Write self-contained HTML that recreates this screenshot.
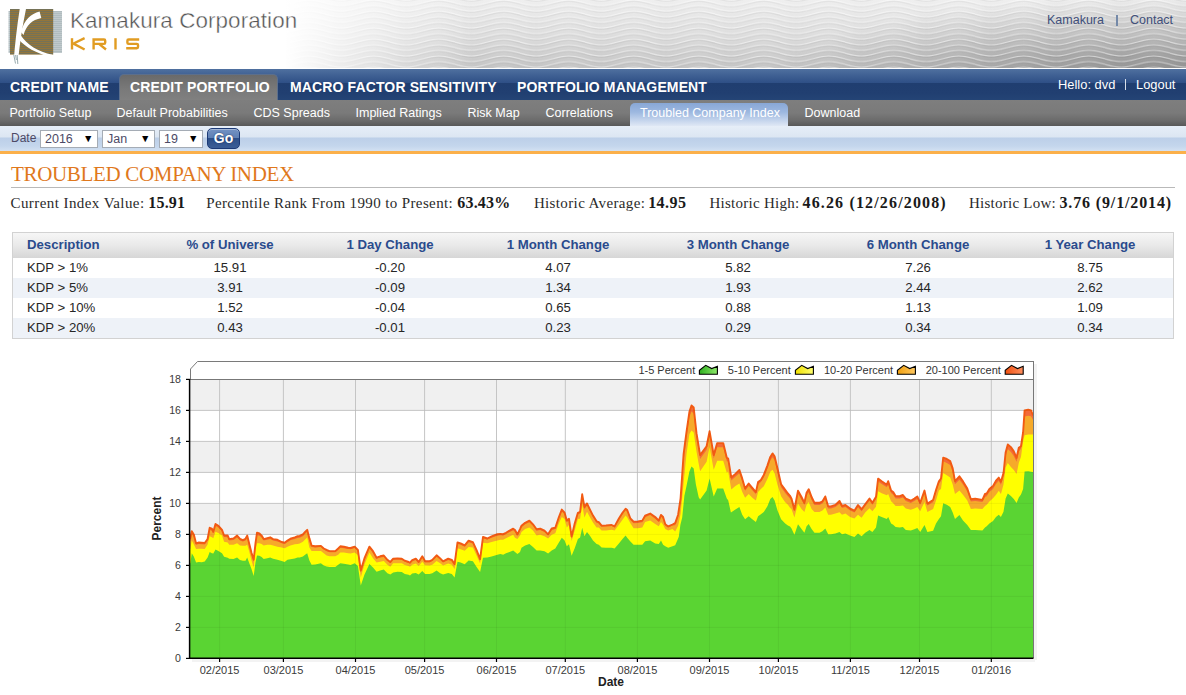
<!DOCTYPE html>
<html><head><meta charset="utf-8">
<style>
*{margin:0;padding:0;box-sizing:border-box}
html,body{width:1186px;height:695px;overflow:hidden;background:#fff;font-family:"Liberation Sans",sans-serif;position:relative}
.abs{position:absolute;white-space:nowrap}
#hdr{position:absolute;left:0;top:0;width:1186px;height:69px}
#nav{position:absolute;left:0;top:69px;width:1186px;height:31px;background:linear-gradient(#4f709f 0px,#3e5f92 7px,#2e4f86 14px,#203e70 14px,#213f71 24px,#244475 31px)}
#nav .it{position:absolute;white-space:nowrap;top:0;height:31px;font-weight:bold;font-size:14px;color:#fff;line-height:36px;padding:0 10px;letter-spacing:0.13px}
#nav .act{top:5px;height:26px;line-height:25px;border-radius:5px 5px 0 0;background:linear-gradient(#6a6a6a,#7a7a7a 60%,#808080);border:1px solid #5c6f8c;border-bottom:none}
#sub{position:absolute;left:0;top:100px;width:1186px;height:26px;background:linear-gradient(#7e7e7e 0,#7a7a7a 50%,#6a6a6a 80%,#585858 100%)}
#sub .it{position:absolute;white-space:nowrap;top:0;height:26px;font-size:12.5px;color:#fff;line-height:26px}
#sub .act{top:3px;height:23px;line-height:21px;padding:0 10px;border-radius:5px 5px 0 0;background:linear-gradient(#88a7d6,#9db8e0 40%,#dfe8f5 100%)}
#datebar{position:absolute;left:0;top:126px;width:1186px;height:25px;background:linear-gradient(#e6eef8 0,#dce6f2 11px,#bccfe8 12px,#c4d6ec 20px,#d3e1f2 25px)}
#oline{position:absolute;left:0;top:151px;width:1186px;height:3px;background:#fbb04a}
.sel{position:absolute;top:130px;height:18px;background:#fff;border:1px solid #a5acb5;font-size:12.5px;color:#4d4a66;line-height:17px;padding-left:4px}
.sel b{position:absolute;right:3.5px;top:0px;font-size:10.5px;color:#000;font-weight:normal;line-height:15px}
#go{position:absolute;left:207px;top:128px;width:33px;height:21px;border-radius:5px;background:linear-gradient(#7392c4 0,#5f80b4 48%,#2c4f89 50%,#3b5e96 100%);border:1px solid #1c3a76;box-shadow:inset 0 1px 0 rgba(255,255,255,0.35);color:#fff;font-weight:bold;font-size:14px;text-align:center;line-height:19px;text-shadow:0 0 1.5px #0b2150}
#title{position:absolute;left:11px;top:162px;font-family:"Liberation Serif",serif;font-size:21px;letter-spacing:-0.33px;color:#e0781c;line-height:25px}
#hr{position:absolute;left:11px;top:187px;width:1164px;height:1px;background:#b9b9b9}
.st{position:absolute;top:192px;font-family:"Liberation Serif",serif;font-size:15px;color:#2a2a2a;line-height:22px;white-space:nowrap}
.sv{font-weight:bold;font-size:16px;color:#1a1a1a;top:191.5px}
#tbl{position:absolute;left:12px;top:232px;width:1162px;height:107px;border:1px solid #d2d2d2;font-size:13.2px}
#tbl .hd{position:absolute;left:0;top:0;width:1160px;height:25px;background:linear-gradient(#f6f6f6,#e9e9e9 50%,#d6d6d6)}
#tbl .r{position:absolute;left:0;width:1160px;height:20px}
.c{position:absolute;top:0;text-align:center;white-space:nowrap}
.hd .c{color:#2a4b8d;font-weight:bold;line-height:23px}
.r .c{color:#262626;line-height:19px}
</style></head><body>
<div id="hdr">
<svg width="1186" height="69" style="position:absolute;left:0;top:0">
<defs>
<linearGradient id="hg" x1="0" y1="0" x2="0" y2="1"><stop offset="0" stop-color="#efefef"/><stop offset="0.5" stop-color="#dedede"/><stop offset="1" stop-color="#c4c4c4"/></linearGradient>
<radialGradient id="hdk" cx="0" cy="0" r="1" gradientUnits="userSpaceOnUse" gradientTransform="translate(1186,80) scale(420,85)"><stop offset="0" stop-color="#000" stop-opacity="0.30"/><stop offset="1" stop-color="#000" stop-opacity="0"/></radialGradient>
<linearGradient id="fade" x1="0" y1="0" x2="1186" y2="0" gradientUnits="userSpaceOnUse"><stop offset="0" stop-color="#fff" stop-opacity="1"/><stop offset="0.24" stop-color="#fff" stop-opacity="1"/><stop offset="0.30" stop-color="#fff" stop-opacity="0.6"/><stop offset="0.40" stop-color="#fff" stop-opacity="0.0"/></linearGradient>
<pattern id="wv" x="0" y="0" width="65" height="5.6" patternUnits="userSpaceOnUse">
<path d="M0 -2.80 C5.30 -1.36 10.37 0.00 16.25 0.00 C22.13 0.00 27.20 -1.36 32.50 -2.80 C37.80 -4.23 42.87 -5.60 48.75 -5.60 C54.63 -5.60 59.70 -4.23 65.00 -2.80 M0 2.80 C5.30 4.23 10.37 5.60 16.25 5.60 C22.13 5.60 27.20 4.23 32.50 2.80 C37.80 1.36 42.87 0.00 48.75 0.00 C54.63 0.00 59.70 1.36 65.00 2.80 M0 8.40 C5.30 9.83 10.37 11.20 16.25 11.20 C22.13 11.20 27.20 9.83 32.50 8.40 C37.80 6.96 42.87 5.60 48.75 5.60 C54.63 5.60 59.70 6.96 65.00 8.40" fill="none" stroke="#000" stroke-opacity="0.05" stroke-width="1.2" transform="translate(0,1.2)"/>
<path d="M0 -2.80 C5.30 -1.36 10.37 0.00 16.25 0.00 C22.13 0.00 27.20 -1.36 32.50 -2.80 C37.80 -4.23 42.87 -5.60 48.75 -5.60 C54.63 -5.60 59.70 -4.23 65.00 -2.80 M0 2.80 C5.30 4.23 10.37 5.60 16.25 5.60 C22.13 5.60 27.20 4.23 32.50 2.80 C37.80 1.36 42.87 0.00 48.75 0.00 C54.63 0.00 59.70 1.36 65.00 2.80 M0 8.40 C5.30 9.83 10.37 11.20 16.25 11.20 C22.13 11.20 27.20 9.83 32.50 8.40 C37.80 6.96 42.87 5.60 48.75 5.60 C54.63 5.60 59.70 6.96 65.00 8.40" fill="none" stroke="#fff" stroke-opacity="0.5" stroke-width="1.15"/>
</pattern>
</defs>
<rect width="1186" height="69" fill="url(#hg)"/>
<rect width="1186" height="69" fill="url(#hdk)"/>
<rect width="1186" height="69" fill="url(#wv)"/>
<rect width="1186" height="69" fill="url(#fade)"/>
<rect y="68" width="1186" height="1" fill="#fff"/>
</svg>
<svg width="70" height="69" style="position:absolute;left:0;top:0" viewBox="0 0 70 69">
<defs><pattern id="ht" width="2" height="2" patternUnits="userSpaceOnUse"><rect width="2" height="2" fill="#8c6f36"/><rect y="1.3" width="2" height="0.7" fill="#5e7478" opacity="0.7"/><circle cx="1" cy="0.6" r="0.45" fill="#b09050"/></pattern>
<pattern id="st" width="3" height="2" patternUnits="userSpaceOnUse"><rect y="0.6" width="3" height="0.9" fill="#4f6a70" opacity="0.9"/></pattern></defs>
<rect x="8.5" y="11" width="53.5" height="42" fill="url(#st)"/>
<rect x="10" y="9" width="43.2" height="45.6" fill="url(#ht)"/>
<path d="M19.7 9 L26 9 C 23 24, 20 40, 17.8 64 L 13.6 62 C 15 44, 17 26, 19.7 9 Z" fill="#fff"/>
<path d="M21 32 C 24 20, 31 14, 39.6 11.6 L 41.3 18 C 32 20, 26.5 25, 23.5 35 Z" fill="#fff"/>
<path d="M20.5 35 C 27 45, 38 51.5, 52.5 54.8 L 48 56.2 C 36 53, 26 47.5, 18.8 39.5 Z" fill="#fff"/>
<path d="M13.8 55 L 15.5 63.5 M 17.2 55 L 17.8 64 M 15.6 55 L 16.4 60" stroke="#6d868b" stroke-width="0.7" fill="none"/>
</svg>
<div class="abs" style="left:70px;top:6px;font-size:22.4px;color:#555;line-height:30px;letter-spacing:0.1px;-webkit-text-stroke:0.4px #fff">Kamakura Corporation</div>
<svg width="80" height="20" style="position:absolute;left:65px;top:33px" viewBox="65 33 80 20">
<g fill="none" stroke="#e19c22" stroke-width="2.4" stroke-linejoin="miter">
<path d="M72 38.2 L72 49.5"/>
<path d="M72.5 44 L84.6 38.2 M73.5 43.6 L84.6 49.5"/>
<path d="M93.6 49.5 L93.6 39.5 L104 39.5 Q105.2 39.5 105.2 40.7 L105.2 42.7 Q105.2 43.9 104 43.9 L93.6 43.9 M99 43.9 L106 49.5"/>
<path d="M115.5 38.2 L115.5 49.5"/>
<path d="M139.2 39.5 L128.6 39.5 Q127.4 39.5 127.4 40.7 L127.4 42.7 Q127.4 43.9 128.6 43.9 L136.8 43.9 Q138 43.9 138 45.1 L138 47 Q138 48.2 136.8 48.2 L126.2 48.2"/>
</g>
</svg>
<div class="abs" style="left:1047px;top:12px;font-size:12.5px;color:#3f4f7a;line-height:16px">Kamakura</div>
<div class="abs" style="left:1116px;top:15px;width:2px;height:11px;background:#7489a8"></div>
<div class="abs" style="left:1130px;top:12px;font-size:12.5px;color:#3f4f7a;line-height:16px">Contact</div>
</div>

<div id="nav">
<div class="it" style="left:0">CREDIT NAME</div>
<div class="it act" style="left:119px;width:159px">CREDIT PORTFOLIO</div>
<div class="it" style="left:280px">MACRO FACTOR SENSITIVITY</div>
<div class="it" style="left:507px">PORTFOLIO MANAGEMENT</div>
<div class="abs" style="left:1058px;top:8px;font-size:12.9px;color:#fff;line-height:16px">Hello: dvd</div>
<div class="abs" style="left:1125px;top:10px;width:1px;height:11px;background:#d8dfea"></div>
<div class="abs" style="left:1136px;top:8px;font-size:12.9px;color:#fff;line-height:16px">Logout</div>
</div>

<div id="sub">
<div class="it" style="left:9.5px">Portfolio Setup</div>
<div class="it" style="left:116.5px">Default Probabilities</div>
<div class="it" style="left:253.5px">CDS Spreads</div>
<div class="it" style="left:355.5px">Implied Ratings</div>
<div class="it" style="left:467.5px">Risk Map</div>
<div class="it" style="left:545.5px">Correlations</div>
<div class="it act" style="left:630px;width:158px">Troubled Company Index</div>
<div class="it" style="left:804.5px">Download</div>
</div>

<div id="datebar"></div>
<div class="abs" style="left:11px;top:130px;font-size:12px;color:#4d4a66;line-height:16px">Date</div>
<div class="sel" style="left:40px;width:58px">2016<b>&#9660;</b></div>
<div class="sel" style="left:102px;width:53px">Jan<b>&#9660;</b></div>
<div class="sel" style="left:159px;width:44px">19<b>&#9660;</b></div>
<div id="go">Go</div>
<div id="oline"></div>

<div id="title">TROUBLED COMPANY INDEX</div>
<div id="hr"></div>
<div class="st" style="left:10.5px;letter-spacing:0.424px">Current Index Value:</div>
<div class="st" style="left:206.2px;letter-spacing:0.380px">Percentile Rank From 1990 to Present:</div>
<div class="st" style="left:533.9px;letter-spacing:0.367px">Historic Average:</div>
<div class="st" style="left:709.4px;letter-spacing:0.272px">Historic High:</div>
<div class="st" style="left:969.0px;letter-spacing:0.254px">Historic Low:</div>
<div class="st sv" style="left:148.2px;letter-spacing:0.225px">15.91</div>
<div class="st sv" style="left:457.2px;letter-spacing:0.220px">63.43%</div>
<div class="st sv" style="left:648.2px;letter-spacing:0.425px">14.95</div>
<div class="st sv" style="left:802.5px;letter-spacing:1.155px">46.26 (12/26/2008)</div>
<div class="st sv" style="left:1059.5px;letter-spacing:0.860px">3.76 (9/1/2014)</div>

<div id="tbl">
<div class="hd">
<div class="c" style="left:14px;text-align:left">Description</div>
<div class="c" style="left:136px;width:162px">% of Universe</div>
<div class="c" style="left:298px;width:158px">1 Day Change</div>
<div class="c" style="left:456px;width:178px">1 Month Change</div>
<div class="c" style="left:634px;width:182px">3 Month Change</div>
<div class="c" style="left:816px;width:178px">6 Month Change</div>
<div class="c" style="left:994px;width:166px">1 Year Change</div>
</div>
<div class="r" style="top:25px;background:#fff">
<div class="c" style="left:14px;text-align:left">KDP &gt; 1%</div>
<div class="c" style="left:136px;width:162px">15.91</div><div class="c" style="left:298px;width:158px">-0.20</div><div class="c" style="left:456px;width:178px">4.07</div><div class="c" style="left:634px;width:182px">5.82</div><div class="c" style="left:816px;width:178px">7.26</div><div class="c" style="left:994px;width:166px">8.75</div>
</div>
<div class="r" style="top:45px;background:#eef2f8">
<div class="c" style="left:14px;text-align:left">KDP &gt; 5%</div>
<div class="c" style="left:136px;width:162px">3.91</div><div class="c" style="left:298px;width:158px">-0.09</div><div class="c" style="left:456px;width:178px">1.34</div><div class="c" style="left:634px;width:182px">1.93</div><div class="c" style="left:816px;width:178px">2.44</div><div class="c" style="left:994px;width:166px">2.62</div>
</div>
<div class="r" style="top:65px;background:#fff">
<div class="c" style="left:14px;text-align:left">KDP &gt; 10%</div>
<div class="c" style="left:136px;width:162px">1.52</div><div class="c" style="left:298px;width:158px">-0.04</div><div class="c" style="left:456px;width:178px">0.65</div><div class="c" style="left:634px;width:182px">0.88</div><div class="c" style="left:816px;width:178px">1.13</div><div class="c" style="left:994px;width:166px">1.09</div>
</div>
<div class="r" style="top:85px;background:#eef2f8">
<div class="c" style="left:14px;text-align:left">KDP &gt; 20%</div>
<div class="c" style="left:136px;width:162px">0.43</div><div class="c" style="left:298px;width:158px">-0.01</div><div class="c" style="left:456px;width:178px">0.23</div><div class="c" style="left:634px;width:182px">0.29</div><div class="c" style="left:816px;width:178px">0.34</div><div class="c" style="left:994px;width:166px">0.34</div>
</div>
</div>

<svg width="1186" height="695" style="position:absolute;left:0;top:0">
<defs><clipPath id="pc"><rect x="190" y="379.4" width="843.4" height="279"/></clipPath><linearGradient id="lgG" x1="0" y1="0" x2="1" y2="0"><stop offset="0" stop-color="#2fb020"/><stop offset="1" stop-color="#8ee86a"/></linearGradient><linearGradient id="lgY" x1="0" y1="0" x2="1" y2="0"><stop offset="0" stop-color="#f0e000"/><stop offset="1" stop-color="#ffff70"/></linearGradient><linearGradient id="lgO" x1="0" y1="0" x2="1" y2="0"><stop offset="0" stop-color="#f0a010"/><stop offset="1" stop-color="#ffc860"/></linearGradient><linearGradient id="lgR" x1="0" y1="0" x2="1" y2="0"><stop offset="0" stop-color="#f05010"/><stop offset="1" stop-color="#ff9060"/></linearGradient></defs>
<path d="M190.5 379 L190.5 369 L197.5 361.5 L1033.5 361.5 L1033.5 658" fill="#fff" stroke="#7a7a7a" stroke-width="1"/>
<rect x="1034" y="364" width="3" height="296" fill="#f3f3f3"/>
<rect x="192" y="659" width="843" height="3" fill="#f3f3f3"/>
<rect x="190" y="627.4" width="843.4" height="31.0" fill="#f0f0f0"/>
<rect x="190" y="596.4" width="843.4" height="31.0" fill="#ffffff"/>
<rect x="190" y="565.4" width="843.4" height="31.0" fill="#f0f0f0"/>
<rect x="190" y="534.4" width="843.4" height="31.0" fill="#ffffff"/>
<rect x="190" y="503.4" width="843.4" height="31.0" fill="#f0f0f0"/>
<rect x="190" y="472.4" width="843.4" height="31.0" fill="#ffffff"/>
<rect x="190" y="441.4" width="843.4" height="31.0" fill="#f0f0f0"/>
<rect x="190" y="410.4" width="843.4" height="31.0" fill="#ffffff"/>
<rect x="190" y="379.4" width="843.4" height="31.0" fill="#f0f0f0"/>
<line x1="190" x2="1033.4" y1="627.4" y2="627.4" stroke="#d0d0d0" stroke-width="1"/>
<line x1="190" x2="1033.4" y1="596.4" y2="596.4" stroke="#d0d0d0" stroke-width="1"/>
<line x1="190" x2="1033.4" y1="565.4" y2="565.4" stroke="#d0d0d0" stroke-width="1"/>
<line x1="190" x2="1033.4" y1="534.4" y2="534.4" stroke="#d0d0d0" stroke-width="1"/>
<line x1="190" x2="1033.4" y1="503.4" y2="503.4" stroke="#d0d0d0" stroke-width="1"/>
<line x1="190" x2="1033.4" y1="472.4" y2="472.4" stroke="#d0d0d0" stroke-width="1"/>
<line x1="190" x2="1033.4" y1="441.4" y2="441.4" stroke="#d0d0d0" stroke-width="1"/>
<line x1="190" x2="1033.4" y1="410.4" y2="410.4" stroke="#d0d0d0" stroke-width="1"/>
<line x1="219.6" x2="219.6" y1="379.4" y2="658" stroke="#d0d0d0" stroke-width="1"/>
<line x1="283.4" x2="283.4" y1="379.4" y2="658" stroke="#d0d0d0" stroke-width="1"/>
<line x1="355.5" x2="355.5" y1="379.4" y2="658" stroke="#d0d0d0" stroke-width="1"/>
<line x1="424.6" x2="424.6" y1="379.4" y2="658" stroke="#d0d0d0" stroke-width="1"/>
<line x1="496.5" x2="496.5" y1="379.4" y2="658" stroke="#d0d0d0" stroke-width="1"/>
<line x1="565.3" x2="565.3" y1="379.4" y2="658" stroke="#d0d0d0" stroke-width="1"/>
<line x1="637.4" x2="637.4" y1="379.4" y2="658" stroke="#d0d0d0" stroke-width="1"/>
<line x1="709.5" x2="709.5" y1="379.4" y2="658" stroke="#d0d0d0" stroke-width="1"/>
<line x1="778.4" x2="778.4" y1="379.4" y2="658" stroke="#d0d0d0" stroke-width="1"/>
<line x1="850.4" x2="850.4" y1="379.4" y2="658" stroke="#d0d0d0" stroke-width="1"/>
<line x1="919.5" x2="919.5" y1="379.4" y2="658" stroke="#d0d0d0" stroke-width="1"/>
<line x1="991.3" x2="991.3" y1="379.4" y2="658" stroke="#d0d0d0" stroke-width="1"/>
<g clip-path="url(#pc)">
<path d="M190.0 658.4 L190.0 538.4 L190.3 538.4 L191.8 531.3 L193.9 534.8 L196.1 543.4 L198.9 542.5 L201.8 542.7 L204.7 543.0 L207.6 539.0 L209.7 527.8 L211.9 528.6 L213.3 531.8 L215.5 524.0 L218.4 525.8 L222.0 529.9 L224.1 535.5 L227.7 535.5 L229.2 539.1 L233.5 538.4 L237.1 535.6 L240.0 538.9 L242.9 540.2 L245.5 538.8 L247.2 535.6 L249.3 544.0 L251.5 552.8 L253.7 559.7 L255.5 543.1 L257.0 532.7 L259.4 533.4 L261.6 535.6 L263.7 539.1 L267.3 538.1 L270.2 537.3 L273.1 539.1 L277.4 539.8 L281.7 542.0 L284.6 542.7 L287.5 540.6 L290.4 538.7 L294.8 537.3 L297.6 536.2 L299.7 535.9 L302.9 534.4 L305.1 531.9 L307.2 529.8 L309.4 538.4 L311.6 545.6 L315.1 546.3 L320.9 545.9 L323.8 548.5 L326.6 549.9 L329.5 551.1 L335.3 551.1 L338.2 548.4 L340.3 546.3 L343.9 546.8 L348.2 547.8 L350.6 548.0 L354.7 546.6 L357.9 549.8 L360.8 570.6 L364.4 558.4 L369.4 546.7 L373.0 551.2 L376.6 557.7 L380.2 556.3 L383.8 555.5 L387.4 559.8 L390.3 562.0 L393.2 558.7 L397.5 558.4 L401.8 558.7 L404.8 560.7 L408.6 562.0 L410.0 562.7 L412.2 560.1 L415.8 558.7 L418.7 562.0 L422.3 556.3 L425.1 561.2 L429.5 561.3 L432.3 559.9 L436.6 555.3 L440.2 558.4 L443.1 561.3 L448.2 558.7 L451.8 559.9 L454.6 564.1 L457.5 542.4 L460.6 543.4 L464.7 545.4 L468.6 540.7 L472.9 542.1 L476.6 550.1 L480.1 559.2 L483.0 536.9 L487.3 538.5 L491.6 536.3 L497.4 534.2 L500.3 533.9 L503.2 534.2 L506.0 532.8 L509.6 530.6 L513.2 528.7 L515.0 530.0 L517.4 534.5 L520.0 529.1 L521.5 525.7 L525.1 522.8 L529.4 520.6 L533.0 524.3 L536.6 529.3 L540.2 528.6 L544.5 530.7 L548.1 534.3 L551.7 528.5 L555.3 527.8 L558.9 517.0 L561.8 509.6 L564.6 512.7 L566.8 520.6 L569.0 518.8 L571.6 536.6 L574.7 523.4 L577.9 512.8 L580.1 511.8 L582.2 494.3 L584.4 507.0 L587.0 503.4 L590.1 509.8 L593.0 515.6 L596.6 521.3 L598.8 522.1 L601.6 525.6 L606.0 525.4 L611.7 525.0 L614.6 526.4 L618.9 518.5 L622.5 512.8 L625.6 508.7 L627.2 510.0 L630.4 518.5 L633.6 521.6 L638.0 521.4 L642.3 520.6 L645.1 515.7 L650.2 513.5 L655.2 517.0 L658.8 520.6 L661.0 514.9 L663.1 517.0 L665.3 524.2 L668.2 526.4 L672.5 524.5 L675.2 523.1 L678.1 514.7 L678.8 510.1 L680.4 499.6 L680.6 498.1 L682.2 474.6 L683.6 454.0 L684.4 447.8 L686.5 432.0 L689.4 411.8 L691.5 405.5 L693.7 407.5 L695.9 427.7 L696.5 433.2 L698.7 446.7 L700.1 455.1 L706.6 446.2 L709.6 431.3 L713.7 455.1 L717.2 443.1 L723.2 443.1 L726.8 457.7 L728.2 458.6 L730.9 475.2 L731.3 477.5 L735.4 473.9 L739.4 470.0 L742.2 478.4 L745.1 488.5 L748.7 483.5 L752.3 487.8 L755.9 492.1 L758.1 482.0 L760.9 480.0 L763.8 474.9 L767.4 465.6 L770.3 456.9 L772.5 453.4 L774.6 456.2 L777.5 468.5 L781.1 484.3 L785.2 489.9 L787.9 493.5 L790.0 495.8 L791.5 498.6 L794.4 509.7 L798.0 490.7 L801.5 497.0 L804.4 502.8 L806.6 492.7 L808.7 489.2 L811.6 497.0 L814.5 502.8 L819.5 502.8 L822.4 501.4 L825.3 496.4 L828.2 506.4 L831.0 506.4 L835.4 504.9 L839.5 501.0 L842.0 506.0 L845.4 505.0 L850.1 508.6 L854.4 510.7 L858.0 505.0 L861.6 509.2 L865.2 504.2 L869.5 498.5 L872.4 502.8 L876.0 496.8 L878.1 478.6 L881.7 481.2 L886.8 484.7 L888.2 481.2 L891.1 490.6 L893.2 492.0 L895.6 496.0 L899.7 496.2 L902.9 495.0 L905.8 498.6 L910.8 500.7 L914.4 498.6 L917.3 496.4 L920.2 502.8 L924.5 490.6 L927.4 503.6 L933.1 500.0 L936.0 490.0 L938.9 481.3 L941.0 478.5 L943.2 457.6 L946.8 459.0 L950.2 461.1 L952.7 468.3 L955.0 481.2 L959.4 476.3 L963.0 481.4 L967.3 488.6 L970.9 499.3 L975.2 498.6 L982.4 499.9 L985.0 494.0 L986.7 493.5 L989.4 489.0 L993.0 485.9 L993.2 485.7 L996.0 480.6 L998.8 477.6 L1000.9 481.8 L1001.0 481.5 L1003.5 473.1 L1003.6 472.5 L1005.6 452.6 L1007.8 444.4 L1010.9 447.1 L1013.8 451.4 L1016.6 457.8 L1018.8 447.8 L1021.0 446.2 L1023.1 432.2 L1024.6 410.4 L1028.2 409.7 L1031.0 410.4 L1032.3 413.5 L1032.8 414.7 L1033.4 414.7 L1033.4 658.4 Z" fill="#f26b3a"/>
<path d="M190.0 658.4 L190.0 540.9 L190.3 540.9 L191.8 533.5 L193.9 537.2 L196.1 544.8 L198.9 544.0 L201.8 544.2 L204.7 544.4 L207.6 540.4 L209.7 529.8 L211.9 530.7 L213.3 533.4 L215.5 525.9 L218.4 527.5 L222.0 531.2 L224.1 537.0 L227.7 537.2 L229.2 540.5 L233.5 539.9 L237.1 537.4 L240.0 540.5 L242.9 541.5 L245.5 540.5 L247.2 537.8 L249.3 545.8 L251.5 554.6 L253.7 561.6 L255.5 544.6 L257.0 535.2 L259.4 535.7 L261.6 537.6 L263.7 540.6 L267.3 539.7 L270.2 539.0 L273.1 540.6 L277.4 541.5 L281.7 543.3 L284.6 544.1 L287.5 542.1 L290.4 540.3 L294.8 539.0 L297.6 538.1 L299.7 537.7 L302.9 536.2 L305.1 533.8 L307.2 531.7 L309.4 540.6 L311.6 546.9 L315.1 547.5 L320.9 547.1 L323.8 549.6 L326.6 551.2 L329.5 552.3 L335.3 552.3 L338.2 550.0 L340.3 547.8 L343.9 548.2 L348.2 549.1 L350.6 549.3 L354.7 548.1 L357.9 551.1 L360.8 572.3 L364.4 559.9 L369.4 548.1 L373.0 552.9 L376.6 558.8 L380.2 557.6 L383.8 556.9 L387.4 561.0 L390.3 563.2 L393.2 559.8 L397.5 559.6 L401.8 559.8 L404.8 561.7 L408.6 563.0 L410.0 563.7 L412.2 561.2 L415.8 559.9 L418.7 562.9 L422.3 557.6 L425.1 562.2 L429.5 562.3 L432.3 561.0 L436.6 556.7 L440.2 559.5 L443.1 562.2 L448.2 559.9 L451.8 561.1 L454.6 565.3 L457.5 543.8 L460.6 544.8 L464.7 546.7 L468.6 542.2 L472.9 543.4 L476.6 551.4 L480.1 560.2 L483.0 538.3 L487.3 539.6 L491.6 537.7 L497.4 535.7 L500.3 535.3 L503.2 535.5 L506.0 534.1 L509.6 532.0 L513.2 530.2 L515.0 531.8 L517.4 535.6 L520.0 530.6 L521.5 527.2 L525.1 524.3 L529.4 522.3 L533.0 525.8 L536.6 530.8 L540.2 530.1 L544.5 532.0 L548.1 535.3 L551.7 530.0 L555.3 529.1 L558.9 518.5 L561.8 511.3 L564.6 514.2 L566.8 522.3 L569.0 520.3 L571.6 537.7 L574.7 525.1 L577.9 514.3 L580.1 513.4 L582.2 496.8 L584.4 509.5 L587.0 505.4 L590.1 511.6 L593.0 517.2 L596.6 522.8 L598.8 523.4 L601.6 526.8 L606.0 526.6 L611.7 526.1 L614.6 527.4 L618.9 520.0 L622.5 514.4 L625.6 510.3 L627.2 511.8 L630.4 519.7 L633.6 523.2 L638.0 523.0 L642.3 522.3 L645.1 517.2 L650.2 515.1 L655.2 518.7 L658.8 522.0 L661.0 516.6 L663.1 518.9 L665.3 525.4 L668.2 527.4 L672.5 525.6 L675.2 525.2 L678.1 517.3 L678.8 513.0 L680.4 503.2 L680.6 501.8 L682.2 480.1 L683.6 461.0 L684.4 454.3 L686.5 437.4 L689.4 417.1 L691.5 411.5 L693.7 413.5 L695.9 432.5 L696.5 437.6 L698.7 450.8 L700.1 459.0 L706.6 449.9 L709.6 435.0 L713.7 458.6 L717.2 447.3 L723.2 447.3 L726.8 461.3 L728.2 461.6 L730.9 478.1 L731.3 480.4 L735.4 476.8 L739.4 473.2 L742.2 481.6 L745.1 490.7 L748.7 486.1 L752.3 490.2 L755.9 494.2 L758.1 484.4 L760.9 482.1 L763.8 477.6 L767.4 468.8 L770.3 460.5 L772.5 457.3 L774.6 460.3 L777.5 472.4 L781.1 487.2 L785.2 492.9 L787.9 496.2 L790.0 498.6 L791.5 501.1 L794.4 511.6 L798.0 493.7 L801.5 499.8 L804.4 505.0 L806.6 495.6 L808.7 492.2 L811.6 499.9 L814.5 505.0 L819.5 505.0 L822.4 503.6 L825.3 499.1 L828.2 508.4 L831.0 508.4 L835.4 506.9 L839.5 503.7 L842.0 508.1 L845.4 507.0 L850.1 510.6 L854.4 512.5 L858.0 507.3 L861.6 511.3 L865.2 506.2 L869.5 500.8 L872.4 504.8 L876.0 499.2 L878.1 481.6 L881.7 484.1 L886.8 487.3 L888.2 484.3 L891.1 493.1 L893.2 494.7 L895.6 498.4 L899.7 498.6 L902.9 497.5 L905.8 500.9 L910.8 502.9 L914.4 500.9 L917.3 498.9 L920.2 504.8 L924.5 493.3 L927.4 505.6 L933.1 502.2 L936.0 492.5 L938.9 483.5 L941.0 481.0 L943.2 461.3 L946.8 462.9 L950.2 465.1 L952.7 472.2 L955.0 484.2 L959.4 479.7 L963.0 484.6 L967.3 491.4 L970.9 501.6 L975.2 500.9 L982.4 502.1 L985.0 496.9 L986.7 496.2 L989.4 492.0 L993.0 488.9 L993.2 488.7 L996.0 484.0 L998.8 480.8 L1000.9 484.7 L1001.0 484.5 L1003.5 475.8 L1003.6 475.2 L1005.6 456.2 L1007.8 448.9 L1010.9 451.9 L1013.8 455.9 L1016.6 461.7 L1018.8 451.4 L1021.0 448.7 L1023.1 434.4 L1024.6 416.4 L1028.2 415.7 L1031.0 416.2 L1032.3 418.6 L1032.8 419.5 L1033.4 419.5 L1033.4 658.4 Z" fill="#f6aa2a"/>
<path d="M190.0 658.4 L190.0 549.0 L190.3 549.0 L191.8 540.4 L193.9 544.6 L196.1 549.0 L198.9 548.7 L201.8 548.7 L204.7 549.0 L207.6 544.6 L209.7 536.2 L211.9 537.2 L213.3 538.2 L215.5 531.7 L218.4 532.9 L222.0 535.4 L224.1 541.7 L227.7 542.5 L229.2 544.7 L233.5 544.7 L237.1 543.2 L240.0 545.4 L242.9 545.7 L245.5 545.7 L247.2 544.7 L249.3 551.7 L251.5 560.5 L253.7 567.4 L255.5 549.4 L257.0 543.2 L259.4 543.2 L261.6 544.0 L263.7 545.4 L267.3 544.7 L270.2 544.7 L273.1 545.4 L277.4 546.8 L281.7 547.5 L284.6 548.3 L287.5 546.8 L290.4 545.4 L294.8 544.3 L297.6 543.9 L299.7 543.6 L302.9 541.8 L305.1 539.6 L307.2 537.5 L309.4 547.6 L311.6 551.1 L315.1 551.1 L320.9 551.1 L323.8 553.3 L326.6 555.4 L329.5 556.2 L335.3 556.2 L338.2 554.7 L340.3 552.6 L343.9 552.6 L348.2 553.3 L350.6 553.4 L354.7 552.5 L357.9 555.3 L360.8 577.6 L364.4 564.6 L369.4 552.5 L373.0 558.2 L376.6 562.5 L380.2 561.8 L383.8 561.1 L387.4 564.7 L390.3 566.8 L393.2 563.2 L397.5 563.2 L401.8 563.2 L404.8 565.0 L408.6 566.1 L410.0 566.8 L412.2 564.7 L415.8 563.5 L418.7 566.1 L422.3 561.8 L425.1 565.3 L429.5 565.4 L432.3 564.7 L436.6 561.1 L440.2 563.2 L443.1 565.4 L448.2 563.5 L451.8 564.7 L454.6 568.9 L457.5 548.3 L460.6 549.3 L464.7 550.7 L468.6 546.9 L472.9 547.6 L476.6 555.6 L480.1 563.4 L483.0 542.7 L487.3 543.3 L491.6 541.9 L497.4 540.4 L500.3 539.7 L503.2 539.7 L506.0 538.3 L509.6 536.4 L513.2 534.7 L515.0 537.7 L517.4 539.0 L520.0 535.4 L521.5 531.9 L525.1 529.0 L529.4 527.6 L533.0 530.5 L536.6 535.5 L540.2 534.8 L544.5 536.2 L548.1 538.4 L551.7 534.8 L555.3 533.3 L558.9 523.3 L561.8 516.9 L564.6 519.0 L566.8 527.6 L569.0 525.0 L571.6 541.1 L574.7 530.4 L577.9 519.0 L580.1 518.8 L582.2 504.8 L584.4 517.5 L587.0 511.8 L590.1 517.5 L593.0 522.5 L596.6 527.6 L598.8 527.6 L601.6 530.4 L606.0 530.5 L611.7 529.8 L614.6 530.5 L618.9 524.8 L622.5 519.7 L625.6 515.4 L627.2 517.6 L630.4 523.3 L633.6 528.3 L638.0 528.3 L642.3 527.6 L645.1 521.9 L650.2 520.4 L655.2 524.0 L658.8 526.2 L661.0 521.9 L663.1 524.7 L665.3 529.1 L668.2 530.5 L672.5 529.1 L675.2 531.6 L678.1 525.7 L678.8 522.4 L680.4 514.8 L680.6 513.8 L682.2 497.4 L683.6 483.1 L684.4 475.1 L686.5 454.1 L689.4 433.9 L691.5 430.4 L693.7 432.5 L695.9 447.6 L696.5 451.6 L698.7 463.7 L700.1 471.3 L706.6 461.8 L709.6 446.9 L713.7 469.7 L717.2 460.7 L723.2 460.7 L726.8 472.8 L728.2 471.4 L730.9 487.3 L731.3 489.5 L735.4 485.9 L739.4 483.4 L742.2 491.8 L745.1 497.7 L748.7 494.1 L752.3 497.7 L755.9 500.6 L758.1 491.9 L760.9 489.1 L763.8 486.2 L767.4 479.0 L770.3 471.8 L772.5 469.7 L774.6 473.2 L777.5 484.8 L781.1 496.3 L785.2 502.3 L787.9 504.8 L790.0 507.8 L791.5 509.1 L794.4 517.5 L798.0 503.4 L801.5 509.0 L804.4 511.9 L806.6 504.7 L808.7 501.9 L811.6 509.0 L814.5 511.9 L819.5 511.9 L822.4 510.5 L825.3 507.6 L828.2 514.8 L831.0 514.8 L835.4 513.4 L839.5 512.3 L842.0 514.8 L845.4 513.4 L850.1 517.0 L854.4 518.4 L858.0 514.8 L861.6 517.7 L865.2 512.6 L869.5 508.3 L872.4 511.2 L876.0 506.7 L878.1 491.3 L881.7 493.2 L886.8 495.3 L888.2 493.9 L891.1 501.2 L893.2 503.3 L895.6 505.9 L899.7 506.1 L902.9 505.5 L905.8 508.4 L910.8 509.8 L914.4 508.4 L917.3 507.0 L920.2 511.2 L924.5 501.9 L927.4 512.0 L933.1 509.1 L936.0 500.5 L938.9 490.4 L941.0 489.0 L943.2 473.1 L946.8 475.3 L950.2 477.5 L952.7 484.6 L955.0 493.9 L959.4 490.5 L963.0 494.8 L967.3 500.6 L970.9 509.1 L975.2 508.4 L982.4 509.1 L985.0 506.1 L986.7 504.8 L989.4 501.6 L993.0 498.3 L993.2 498.1 L996.0 494.8 L998.8 490.7 L1000.9 493.9 L1001.0 493.8 L1003.5 484.4 L1003.6 483.6 L1005.6 467.6 L1007.8 462.9 L1010.9 467.0 L1013.8 469.9 L1016.6 474.1 L1018.8 462.7 L1021.0 456.7 L1023.1 441.3 L1024.6 435.3 L1028.2 434.6 L1031.0 434.6 L1032.3 434.6 L1032.8 434.6 L1033.4 434.6 L1033.4 658.4 Z" fill="#ffff00"/>
<path d="M190.0 658.4 L190.0 563.3 L190.3 563.3 L191.8 553.3 L193.9 556.8 L196.1 562.6 L198.9 561.9 L201.8 562.2 L204.7 561.6 L207.6 557.5 L209.7 551.9 L211.9 553.2 L213.3 553.5 L215.5 549.6 L218.4 551.1 L222.0 553.3 L224.1 556.8 L227.7 557.8 L229.2 558.7 L233.5 559.0 L237.1 557.6 L240.0 560.1 L242.9 560.8 L245.5 560.8 L247.2 557.6 L249.3 563.2 L251.5 569.0 L253.7 576.0 L255.5 562.2 L257.0 555.4 L259.4 555.8 L261.6 556.9 L263.7 559.0 L267.3 558.3 L270.2 557.6 L273.1 558.7 L277.4 559.7 L281.7 561.1 L284.6 561.9 L287.5 559.7 L290.4 559.3 L294.8 558.5 L297.6 557.5 L299.7 557.5 L302.9 556.4 L305.1 554.7 L307.2 553.3 L309.4 560.4 L311.6 564.7 L315.1 564.5 L320.9 563.3 L323.8 565.5 L326.6 566.5 L329.5 566.9 L335.3 566.9 L338.2 564.7 L340.3 563.3 L343.9 563.7 L348.2 564.5 L350.6 565.0 L354.7 563.3 L357.9 566.0 L360.8 585.4 L364.4 574.7 L369.4 563.9 L373.0 567.5 L376.6 571.8 L380.2 570.4 L383.8 569.6 L387.4 573.2 L390.3 574.4 L393.2 572.5 L397.5 571.8 L401.8 572.1 L404.8 573.9 L408.6 574.7 L410.0 575.4 L412.2 573.5 L415.8 573.0 L418.7 574.6 L422.3 571.1 L425.1 573.9 L429.5 574.0 L432.3 573.2 L436.6 570.4 L440.2 573.2 L443.1 574.4 L448.2 573.0 L451.8 574.0 L454.6 577.5 L457.5 561.8 L460.6 562.6 L464.7 564.3 L468.6 560.5 L472.9 561.2 L476.6 567.1 L480.1 572.0 L483.0 557.7 L487.3 557.6 L491.6 556.5 L497.4 554.8 L500.3 554.0 L503.2 554.7 L506.0 553.3 L509.6 551.9 L513.2 550.4 L515.0 552.0 L517.4 554.1 L520.0 551.9 L521.5 547.7 L525.1 545.5 L529.4 544.1 L533.0 547.0 L536.6 550.6 L540.2 550.6 L544.5 551.3 L548.1 553.4 L551.7 550.6 L555.3 548.4 L558.9 542.6 L561.8 537.7 L564.6 540.5 L566.8 546.3 L569.0 544.3 L571.6 555.8 L574.7 548.3 L577.9 539.1 L580.1 537.5 L582.2 527.7 L584.4 536.2 L587.0 531.9 L590.1 536.1 L593.0 540.5 L596.6 544.1 L598.8 544.8 L601.6 547.6 L606.0 547.7 L611.7 547.7 L614.6 548.4 L618.9 543.4 L622.5 539.1 L625.6 535.5 L627.2 537.7 L630.4 541.6 L633.6 544.8 L638.0 544.8 L642.3 544.8 L645.1 541.3 L650.2 540.5 L655.2 543.4 L658.8 544.1 L661.0 540.6 L663.1 544.8 L665.3 546.3 L668.2 547.7 L672.5 546.3 L675.2 545.2 L678.1 538.5 L678.8 536.8 L680.4 524.7 L680.6 523.9 L682.2 517.5 L683.6 503.5 L684.4 495.7 L686.5 485.9 L689.4 471.5 L691.5 466.6 L693.7 468.6 L695.9 484.6 L696.5 487.3 L698.7 497.2 L700.1 499.5 L706.6 490.5 L709.6 478.5 L713.7 496.4 L717.2 488.4 L723.2 488.4 L726.8 498.5 L728.2 500.2 L730.9 512.5 L731.3 512.3 L735.4 509.4 L739.4 507.1 L742.2 514.8 L745.1 519.2 L748.7 516.3 L752.3 519.2 L755.9 522.1 L758.1 516.3 L760.9 514.2 L763.8 512.0 L767.4 506.3 L770.3 499.1 L772.5 497.0 L774.6 500.5 L777.5 510.6 L781.1 519.2 L785.2 523.5 L787.9 525.5 L790.0 526.4 L791.5 528.5 L794.4 534.7 L798.0 524.2 L801.5 529.1 L804.4 532.7 L806.6 526.2 L808.7 524.1 L811.6 529.1 L814.5 532.7 L819.5 532.7 L822.4 531.3 L825.3 528.4 L828.2 534.2 L831.0 534.2 L835.4 533.4 L839.5 532.0 L842.0 534.2 L845.4 533.5 L850.1 535.6 L854.4 537.0 L858.0 533.5 L861.6 536.3 L865.2 532.7 L869.5 529.9 L872.4 532.0 L876.0 527.5 L878.1 515.6 L881.7 516.9 L886.8 519.0 L888.2 516.9 L891.1 523.4 L893.2 524.8 L895.6 527.0 L899.7 527.6 L902.9 527.1 L905.8 529.9 L910.8 530.6 L914.4 529.2 L917.3 528.1 L920.2 532.1 L924.5 524.9 L927.4 532.1 L933.1 530.7 L936.0 523.5 L938.9 519.1 L941.0 516.3 L943.2 503.3 L946.8 504.8 L950.2 506.9 L952.7 512.6 L955.0 519.1 L959.4 514.9 L963.0 520.6 L967.3 524.9 L970.9 529.9 L975.2 529.9 L982.4 530.6 L985.0 527.6 L986.7 526.3 L989.4 523.4 L993.0 520.9 L993.2 520.7 L996.0 517.0 L998.8 514.8 L1000.9 516.9 L1001.0 516.8 L1003.5 511.7 L1003.6 511.1 L1005.6 498.4 L1007.8 493.5 L1010.9 496.0 L1013.8 498.9 L1016.6 503.1 L1018.8 497.4 L1021.0 494.5 L1023.1 488.9 L1024.6 471.5 L1028.2 471.2 L1031.0 471.7 L1032.3 471.9 L1032.8 471.9 L1033.4 471.9 L1033.4 658.4 Z" fill="#5ad433"/>
<path d="M190.0 538.4 L190.3 538.4 L191.8 531.3 L193.9 534.8 L196.1 543.4 L198.9 542.5 L201.8 542.7 L204.7 543.0 L207.6 539.0 L209.7 527.8 L211.9 528.6 L213.3 531.8 L215.5 524.0 L218.4 525.8 L222.0 529.9 L224.1 535.5 L227.7 535.5 L229.2 539.1 L233.5 538.4 L237.1 535.6 L240.0 538.9 L242.9 540.2 L245.5 538.8 L247.2 535.6 L249.3 544.0 L251.5 552.8 L253.7 559.7 L255.5 543.1 L257.0 532.7 L259.4 533.4 L261.6 535.6 L263.7 539.1 L267.3 538.1 L270.2 537.3 L273.1 539.1 L277.4 539.8 L281.7 542.0 L284.6 542.7 L287.5 540.6 L290.4 538.7 L294.8 537.3 L297.6 536.2 L299.7 535.9 L302.9 534.4 L305.1 531.9 L307.2 529.8 L309.4 538.4 L311.6 545.6 L315.1 546.3 L320.9 545.9 L323.8 548.5 L326.6 549.9 L329.5 551.1 L335.3 551.1 L338.2 548.4 L340.3 546.3 L343.9 546.8 L348.2 547.8 L350.6 548.0 L354.7 546.6 L357.9 549.8 L360.8 570.6 L364.4 558.4 L369.4 546.7 L373.0 551.2 L376.6 557.7 L380.2 556.3 L383.8 555.5 L387.4 559.8 L390.3 562.0 L393.2 558.7 L397.5 558.4 L401.8 558.7 L404.8 560.7 L408.6 562.0 L410.0 562.7 L412.2 560.1 L415.8 558.7 L418.7 562.0 L422.3 556.3 L425.1 561.2 L429.5 561.3 L432.3 559.9 L436.6 555.3 L440.2 558.4 L443.1 561.3 L448.2 558.7 L451.8 559.9 L454.6 564.1 L457.5 542.4 L460.6 543.4 L464.7 545.4 L468.6 540.7 L472.9 542.1 L476.6 550.1 L480.1 559.2 L483.0 536.9 L487.3 538.5 L491.6 536.3 L497.4 534.2 L500.3 533.9 L503.2 534.2 L506.0 532.8 L509.6 530.6 L513.2 528.7 L515.0 530.0 L517.4 534.5 L520.0 529.1 L521.5 525.7 L525.1 522.8 L529.4 520.6 L533.0 524.3 L536.6 529.3 L540.2 528.6 L544.5 530.7 L548.1 534.3 L551.7 528.5 L555.3 527.8 L558.9 517.0 L561.8 509.6 L564.6 512.7 L566.8 520.6 L569.0 518.8 L571.6 536.6 L574.7 523.4 L577.9 512.8 L580.1 511.8 L582.2 494.3 L584.4 507.0 L587.0 503.4 L590.1 509.8 L593.0 515.6 L596.6 521.3 L598.8 522.1 L601.6 525.6 L606.0 525.4 L611.7 525.0 L614.6 526.4 L618.9 518.5 L622.5 512.8 L625.6 508.7 L627.2 510.0 L630.4 518.5 L633.6 521.6 L638.0 521.4 L642.3 520.6 L645.1 515.7 L650.2 513.5 L655.2 517.0 L658.8 520.6 L661.0 514.9 L663.1 517.0 L665.3 524.2 L668.2 526.4 L672.5 524.5 L675.2 523.1 L678.1 514.7 L678.8 510.1 L680.4 499.6 L680.6 498.1 L682.2 474.6 L683.6 454.0 L684.4 447.8 L686.5 432.0 L689.4 411.8 L691.5 405.5 L693.7 407.5 L695.9 427.7 L696.5 433.2 L698.7 446.7 L700.1 455.1 L706.6 446.2 L709.6 431.3 L713.7 455.1 L717.2 443.1 L723.2 443.1 L726.8 457.7 L728.2 458.6 L730.9 475.2 L731.3 477.5 L735.4 473.9 L739.4 470.0 L742.2 478.4 L745.1 488.5 L748.7 483.5 L752.3 487.8 L755.9 492.1 L758.1 482.0 L760.9 480.0 L763.8 474.9 L767.4 465.6 L770.3 456.9 L772.5 453.4 L774.6 456.2 L777.5 468.5 L781.1 484.3 L785.2 489.9 L787.9 493.5 L790.0 495.8 L791.5 498.6 L794.4 509.7 L798.0 490.7 L801.5 497.0 L804.4 502.8 L806.6 492.7 L808.7 489.2 L811.6 497.0 L814.5 502.8 L819.5 502.8 L822.4 501.4 L825.3 496.4 L828.2 506.4 L831.0 506.4 L835.4 504.9 L839.5 501.0 L842.0 506.0 L845.4 505.0 L850.1 508.6 L854.4 510.7 L858.0 505.0 L861.6 509.2 L865.2 504.2 L869.5 498.5 L872.4 502.8 L876.0 496.8 L878.1 478.6 L881.7 481.2 L886.8 484.7 L888.2 481.2 L891.1 490.6 L893.2 492.0 L895.6 496.0 L899.7 496.2 L902.9 495.0 L905.8 498.6 L910.8 500.7 L914.4 498.6 L917.3 496.4 L920.2 502.8 L924.5 490.6 L927.4 503.6 L933.1 500.0 L936.0 490.0 L938.9 481.3 L941.0 478.5 L943.2 457.6 L946.8 459.0 L950.2 461.1 L952.7 468.3 L955.0 481.2 L959.4 476.3 L963.0 481.4 L967.3 488.6 L970.9 499.3 L975.2 498.6 L982.4 499.9 L985.0 494.0 L986.7 493.5 L989.4 489.0 L993.0 485.9 L993.2 485.7 L996.0 480.6 L998.8 477.6 L1000.9 481.8 L1001.0 481.5 L1003.5 473.1 L1003.6 472.5 L1005.6 452.6 L1007.8 444.4 L1010.9 447.1 L1013.8 451.4 L1016.6 457.8 L1018.8 447.8 L1021.0 446.2 L1023.1 432.2 L1024.6 410.4 L1028.2 409.7 L1031.0 410.4 L1032.3 413.5 L1032.8 414.7 L1033.4 414.7" fill="none" stroke="#f25a12" stroke-width="1.9" stroke-linejoin="round"/>
</g>
<line x1="190" x2="1033.4" y1="627.4" y2="627.4" stroke="rgba(0,0,0,0.05)" stroke-width="1"/>
<line x1="190" x2="1033.4" y1="596.4" y2="596.4" stroke="rgba(0,0,0,0.05)" stroke-width="1"/>
<line x1="190" x2="1033.4" y1="565.4" y2="565.4" stroke="rgba(0,0,0,0.05)" stroke-width="1"/>
<line x1="190" x2="1033.4" y1="534.4" y2="534.4" stroke="rgba(0,0,0,0.05)" stroke-width="1"/>
<line x1="190" x2="1033.4" y1="503.4" y2="503.4" stroke="rgba(0,0,0,0.05)" stroke-width="1"/>
<line x1="190" x2="1033.4" y1="472.4" y2="472.4" stroke="rgba(0,0,0,0.05)" stroke-width="1"/>
<line x1="190" x2="1033.4" y1="441.4" y2="441.4" stroke="rgba(0,0,0,0.05)" stroke-width="1"/>
<line x1="190" x2="1033.4" y1="410.4" y2="410.4" stroke="rgba(0,0,0,0.05)" stroke-width="1"/>
<line x1="219.6" x2="219.6" y1="379.4" y2="658" stroke="rgba(0,0,0,0.05)" stroke-width="1"/>
<line x1="283.4" x2="283.4" y1="379.4" y2="658" stroke="rgba(0,0,0,0.05)" stroke-width="1"/>
<line x1="355.5" x2="355.5" y1="379.4" y2="658" stroke="rgba(0,0,0,0.05)" stroke-width="1"/>
<line x1="424.6" x2="424.6" y1="379.4" y2="658" stroke="rgba(0,0,0,0.05)" stroke-width="1"/>
<line x1="496.5" x2="496.5" y1="379.4" y2="658" stroke="rgba(0,0,0,0.05)" stroke-width="1"/>
<line x1="565.3" x2="565.3" y1="379.4" y2="658" stroke="rgba(0,0,0,0.05)" stroke-width="1"/>
<line x1="637.4" x2="637.4" y1="379.4" y2="658" stroke="rgba(0,0,0,0.05)" stroke-width="1"/>
<line x1="709.5" x2="709.5" y1="379.4" y2="658" stroke="rgba(0,0,0,0.05)" stroke-width="1"/>
<line x1="778.4" x2="778.4" y1="379.4" y2="658" stroke="rgba(0,0,0,0.05)" stroke-width="1"/>
<line x1="850.4" x2="850.4" y1="379.4" y2="658" stroke="rgba(0,0,0,0.05)" stroke-width="1"/>
<line x1="919.5" x2="919.5" y1="379.4" y2="658" stroke="rgba(0,0,0,0.05)" stroke-width="1"/>
<line x1="991.3" x2="991.3" y1="379.4" y2="658" stroke="rgba(0,0,0,0.05)" stroke-width="1"/>
<line x1="190" x2="1033.5" y1="379.5" y2="379.5" stroke="#777" stroke-width="1"/>
<line x1="1033.5" x2="1033.5" y1="361" y2="658" stroke="#777" stroke-width="1"/>
<line x1="189.6" x2="189.6" y1="379" y2="658.5" stroke="#000" stroke-width="1.5"/>
<line x1="189" x2="1033.5" y1="658.2" y2="658.2" stroke="#000" stroke-width="1.5"/>
<line x1="186" x2="190" y1="658.4" y2="658.4" stroke="#000" stroke-width="1.2"/>
<text x="181" y="662.2" font-family="Liberation Sans" font-size="10.6" fill="#3a3a3a" text-anchor="end">0</text>
<line x1="186" x2="190" y1="627.4" y2="627.4" stroke="#000" stroke-width="1.2"/>
<text x="181" y="631.2" font-family="Liberation Sans" font-size="10.6" fill="#3a3a3a" text-anchor="end">2</text>
<line x1="186" x2="190" y1="596.4" y2="596.4" stroke="#000" stroke-width="1.2"/>
<text x="181" y="600.2" font-family="Liberation Sans" font-size="10.6" fill="#3a3a3a" text-anchor="end">4</text>
<line x1="186" x2="190" y1="565.4" y2="565.4" stroke="#000" stroke-width="1.2"/>
<text x="181" y="569.2" font-family="Liberation Sans" font-size="10.6" fill="#3a3a3a" text-anchor="end">6</text>
<line x1="186" x2="190" y1="534.4" y2="534.4" stroke="#000" stroke-width="1.2"/>
<text x="181" y="538.2" font-family="Liberation Sans" font-size="10.6" fill="#3a3a3a" text-anchor="end">8</text>
<line x1="186" x2="190" y1="503.4" y2="503.4" stroke="#000" stroke-width="1.2"/>
<text x="181" y="507.2" font-family="Liberation Sans" font-size="10.6" fill="#3a3a3a" text-anchor="end">10</text>
<line x1="186" x2="190" y1="472.4" y2="472.4" stroke="#000" stroke-width="1.2"/>
<text x="181" y="476.2" font-family="Liberation Sans" font-size="10.6" fill="#3a3a3a" text-anchor="end">12</text>
<line x1="186" x2="190" y1="441.4" y2="441.4" stroke="#000" stroke-width="1.2"/>
<text x="181" y="445.2" font-family="Liberation Sans" font-size="10.6" fill="#3a3a3a" text-anchor="end">14</text>
<line x1="186" x2="190" y1="410.4" y2="410.4" stroke="#000" stroke-width="1.2"/>
<text x="181" y="414.2" font-family="Liberation Sans" font-size="10.6" fill="#3a3a3a" text-anchor="end">16</text>
<line x1="186" x2="190" y1="379.4" y2="379.4" stroke="#000" stroke-width="1.2"/>
<text x="181" y="383.2" font-family="Liberation Sans" font-size="10.6" fill="#3a3a3a" text-anchor="end">18</text>
<line x1="219.6" x2="219.6" y1="658" y2="662" stroke="#000" stroke-width="1.2"/>
<text x="219.6" y="674" font-family="Liberation Sans" font-size="11" fill="#3a3a3a" text-anchor="middle">02/2015</text>
<line x1="283.4" x2="283.4" y1="658" y2="662" stroke="#000" stroke-width="1.2"/>
<text x="283.4" y="674" font-family="Liberation Sans" font-size="11" fill="#3a3a3a" text-anchor="middle">03/2015</text>
<line x1="355.5" x2="355.5" y1="658" y2="662" stroke="#000" stroke-width="1.2"/>
<text x="355.5" y="674" font-family="Liberation Sans" font-size="11" fill="#3a3a3a" text-anchor="middle">04/2015</text>
<line x1="424.6" x2="424.6" y1="658" y2="662" stroke="#000" stroke-width="1.2"/>
<text x="424.6" y="674" font-family="Liberation Sans" font-size="11" fill="#3a3a3a" text-anchor="middle">05/2015</text>
<line x1="496.5" x2="496.5" y1="658" y2="662" stroke="#000" stroke-width="1.2"/>
<text x="496.5" y="674" font-family="Liberation Sans" font-size="11" fill="#3a3a3a" text-anchor="middle">06/2015</text>
<line x1="565.3" x2="565.3" y1="658" y2="662" stroke="#000" stroke-width="1.2"/>
<text x="565.3" y="674" font-family="Liberation Sans" font-size="11" fill="#3a3a3a" text-anchor="middle">07/2015</text>
<line x1="637.4" x2="637.4" y1="658" y2="662" stroke="#000" stroke-width="1.2"/>
<text x="637.4" y="674" font-family="Liberation Sans" font-size="11" fill="#3a3a3a" text-anchor="middle">08/2015</text>
<line x1="709.5" x2="709.5" y1="658" y2="662" stroke="#000" stroke-width="1.2"/>
<text x="709.5" y="674" font-family="Liberation Sans" font-size="11" fill="#3a3a3a" text-anchor="middle">09/2015</text>
<line x1="778.4" x2="778.4" y1="658" y2="662" stroke="#000" stroke-width="1.2"/>
<text x="778.4" y="674" font-family="Liberation Sans" font-size="11" fill="#3a3a3a" text-anchor="middle">10/2015</text>
<line x1="850.4" x2="850.4" y1="658" y2="662" stroke="#000" stroke-width="1.2"/>
<text x="850.4" y="674" font-family="Liberation Sans" font-size="11" fill="#3a3a3a" text-anchor="middle">11/2015</text>
<line x1="919.5" x2="919.5" y1="658" y2="662" stroke="#000" stroke-width="1.2"/>
<text x="919.5" y="674" font-family="Liberation Sans" font-size="11" fill="#3a3a3a" text-anchor="middle">12/2015</text>
<line x1="991.3" x2="991.3" y1="658" y2="662" stroke="#000" stroke-width="1.2"/>
<text x="991.3" y="674" font-family="Liberation Sans" font-size="11" fill="#3a3a3a" text-anchor="middle">01/2016</text>
<text x="611" y="686" font-family="Liberation Sans" font-size="12" font-weight="bold" fill="#222" text-anchor="middle">Date</text>
<text transform="translate(161.2,518.5) rotate(-90)" font-family="Liberation Sans" font-size="12" font-weight="bold" fill="#222" text-anchor="middle">Percent</text>
<text x="638.4" y="374" font-family="Liberation Sans" font-size="11" fill="#333">1-5 Percent</text>
<path d="M699.4 374.3 L699.4 370.3 L705.7 365.3 L711.7 368.6 L717.4 366.3 L717.4 374.3 Z" fill="url(#lgG)" stroke="#000" stroke-width="1.1" stroke-linejoin="miter"/>
<text x="727.8" y="374" font-family="Liberation Sans" font-size="11" fill="#333">5-10 Percent</text>
<path d="M795.4 374.3 L795.4 370.3 L801.7 365.3 L807.7 368.6 L813.4 366.3 L813.4 374.3 Z" fill="url(#lgY)" stroke="#000" stroke-width="1.1" stroke-linejoin="miter"/>
<text x="824.0" y="374" font-family="Liberation Sans" font-size="11" fill="#333">10-20 Percent</text>
<path d="M897.4 374.3 L897.4 370.3 L903.7 365.3 L909.7 368.6 L915.4 366.3 L915.4 374.3 Z" fill="url(#lgO)" stroke="#000" stroke-width="1.1" stroke-linejoin="miter"/>
<text x="925.7" y="374" font-family="Liberation Sans" font-size="11" fill="#333">20-100 Percent</text>
<path d="M1005.2 374.3 L1005.2 370.3 L1011.5 365.3 L1017.5 368.6 L1023.2 366.3 L1023.2 374.3 Z" fill="url(#lgR)" stroke="#000" stroke-width="1.1" stroke-linejoin="miter"/>
</svg>
</body></html>
